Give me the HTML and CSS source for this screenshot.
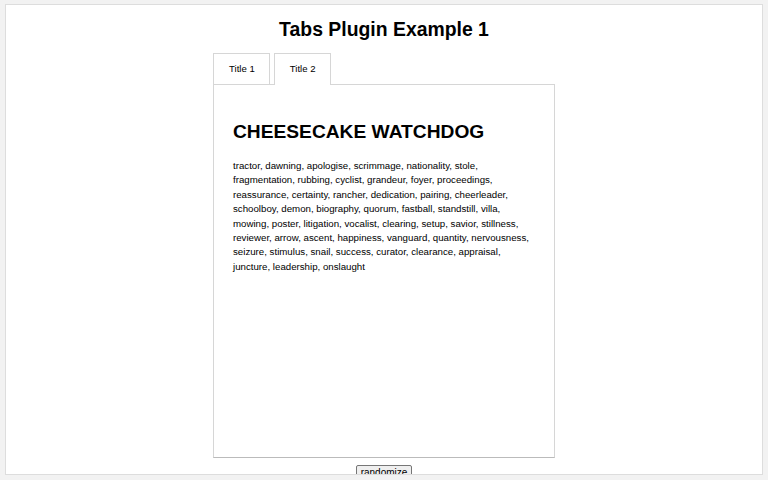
FILE: index.html
```html
<!DOCTYPE html>
<html lang="en">
<head>
  <meta charset="UTF-8" />
  <title>Tabs Plugin Example 1</title>
  <link rel="stylesheet" href="styles.css">
</head>
<body>
  <div class="page">
    <h1>Tabs Plugin Example 1</h1>

    <div class="tabs">
      <ul class="tab-list">
        <li class="tab">Title 1</li>
        <li class="tab active">Title 2</li>
      </ul>
      <div class="tab-panel">
        <h2>CHEESECAKE WATCHDOG</h2>
        <p>tractor, dawning, apologise, scrimmage, nationality, stole, fragmentation, rubbing, cyclist, grandeur, foyer, proceedings, reassurance, certainty, rancher, dedication, pairing, cheerleader, schoolboy, demon, biography, quorum, fastball, standstill, villa, mowing, poster, litigation, vocalist, clearing, setup, savior, stillness, reviewer, arrow, ascent, happiness, vanguard, quantity, nervousness, seizure, stimulus, snail, success, curator, clearance, appraisal, juncture, leadership, onslaught</p>
      </div>
    </div>

    <div class="controls"><button>randomize</button></div>
  </div>
</body>
</html>
```

FILE: styles.css
```css
html { background:#f2f2f2; }
body { margin:4px 5px 0; font-family:'Liberation Sans', Arial, sans-serif; color:#000; }
.page { background:#fff; border:1px solid #ddd; height:471px; box-sizing:border-box; overflow:hidden; }
h1 { font-size:19.4px; font-weight:bold; text-align:center; margin:13px 0 13px; line-height:22px; }

.tabs { width:342px; margin:0 auto; }
.tab-list { list-style:none; margin:0; padding:0; display:flex; gap:4px; }
.tab { font-size:9.6px; padding:0 14px 0 15px; height:30px; line-height:30px; border:1px solid #d6d6d6; border-bottom:none; background:#fff; }
.tab.active { position:relative; top:1px; margin-top:-1px; height:31px; line-height:30px; }
.tab-panel { border:1px solid #d6d6d6; border-bottom-color:#bbb; height:374px; box-sizing:border-box; padding:20px 19px; }
.tab-panel h2 { font-size:19.2px; margin:16px 0 16px; line-height:22px; }
.tab-panel p { font-size:9.7px; line-height:14.4px; margin:0; }

.controls { text-align:center; margin-top:7px; line-height:0; }
.controls button { font-family:'Liberation Sans', Arial, sans-serif; font-size:10px; line-height:12px; padding:1px 4px; border:1px solid #767676; border-radius:2px; background:#efefef; vertical-align:top; }
```
